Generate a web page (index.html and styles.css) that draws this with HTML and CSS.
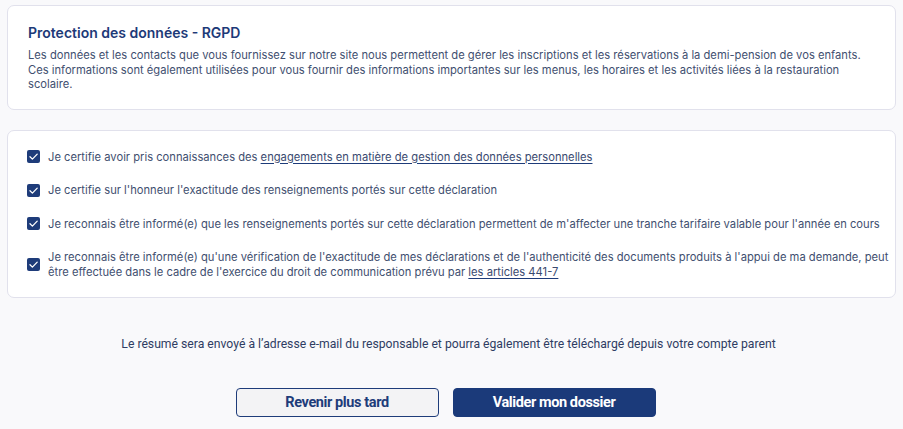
FILE: index.html
```html
<!DOCTYPE html>
<html lang="fr">
<head>
<meta charset="utf-8">
<title>RGPD</title>
<link rel="stylesheet" href="styles.css">
</head>
<body>
<main class="page">
  <section class="card card-info">
    <h2 class="title">Protection des données - RGPD</h2>
    <p class="text">Les données et les contacts que vous fournissez sur notre site nous permettent de gérer les inscriptions et les réservations à la demi-pension de vos enfants.<br>Ces informations sont également utilisées pour vous fournir des informations importantes sur les menus, les horaires et les activités liées à la restauration scolaire.</p>
  </section>

  <section class="card card-checks">
    <label class="check">
      <span class="box"><svg viewBox="0 0 13 13" width="13" height="13"><path d="M3 6.8 L5.4 9.1 L10.2 4.1" fill="none" stroke="#fff" stroke-width="1.3" stroke-linecap="round" stroke-linejoin="round"/></svg></span>
      <span class="label">Je certifie avoir pris connaissances des <a href="#" class="link">engagements en matière de gestion des données personnelles</a></span>
    </label>
    <label class="check">
      <span class="box"><svg viewBox="0 0 13 13" width="13" height="13"><path d="M3 6.8 L5.4 9.1 L10.2 4.1" fill="none" stroke="#fff" stroke-width="1.3" stroke-linecap="round" stroke-linejoin="round"/></svg></span>
      <span class="label">Je certifie sur l'honneur l'exactitude des renseignements portés sur cette déclaration</span>
    </label>
    <label class="check">
      <span class="box"><svg viewBox="0 0 13 13" width="13" height="13"><path d="M3 6.8 L5.4 9.1 L10.2 4.1" fill="none" stroke="#fff" stroke-width="1.3" stroke-linecap="round" stroke-linejoin="round"/></svg></span>
      <span class="label">Je reconnais être informé(e) que les renseignements portés sur cette déclaration permettent de m'affecter une tranche tarifaire valable pour l'année en cours</span>
    </label>
    <label class="check">
      <span class="box"><svg viewBox="0 0 13 13" width="13" height="13"><path d="M3 6.8 L5.4 9.1 L10.2 4.1" fill="none" stroke="#fff" stroke-width="1.3" stroke-linecap="round" stroke-linejoin="round"/></svg></span>
      <span class="label">Je reconnais être informé(e) qu'une vérification de l'exactitude de mes déclarations et de l'authenticité des documents produits à l'appui de ma demande, peut être effectuée dans le cadre de l'exercice du droit de communication prévu par <a href="#" class="link">les articles 441-7</a></span>
    </label>
  </section>

  <p class="note">Le résumé sera envoyé à l’adresse e-mail du responsable et pourra également être téléchargé depuis votre compte parent</p>

  <div class="actions">
    <button class="btn btn-secondary" type="button">Revenir plus tard</button>
    <button class="btn btn-primary" type="button">Valider mon dossier</button>
  </div>
</main>
</body>
</html>
```

FILE: styles.css
```css
html, body {
  margin: 0;
  padding: 0;
  background: #f9f9fb;
}
body {
  font-family: Inter, "Noto Sans", sans-serif;
  color: #3b4a6b;
}
.page {
  padding: 5px 7px 0 7px;
  display: flex;
  flex-direction: column;
}
.card {
  background: #ffffff;
  border: 1px solid #e1e1ec;
  border-radius: 7px;
}
.card-info {
  padding: 17px 20px 17px 20px;
}
.title {
  margin: 0 0 6px 0;
  font-size: 14px;
  line-height: 19px;
  font-weight: 600;
  color: #1d3a78;
}
.text {
  margin: 0;
  font-size: 11.2px;
  line-height: 14.5px;
  color: #3f4f70;
}
.card-checks {
  margin-top: 20px;
  padding: 19px 6px 18px 19px;
  display: flex;
  flex-direction: column;
  gap: 19px;
}
.check {
  display: flex;
  align-items: center;
  gap: 8px;
  font-size: 11.2px;
  line-height: 14.5px;
  color: #3f4f70;
}
.box {
  flex: 0 0 13px;
  width: 13px;
  height: 13px;
  border-radius: 2px;
  background: #1e3c7a;
  display: flex;
}
.link {
  color: #3a4a70;
  text-decoration: underline;
  text-decoration-color: #1e3c7a;
  text-decoration-thickness: 1px;
  text-underline-offset: 2px;
}
.note {
  margin: 39px 0 0 0;
  padding-right: 6px;
  text-align: center;
  font-family: Roboto, "Liberation Sans", sans-serif;
  font-size: 12.2px;
  line-height: 14px;
  color: #2f3d63;
}
.actions {
  margin-top: 37px;
  padding-right: 12px;
  display: flex;
  justify-content: center;
  gap: 14px;
}
.btn {
  width: 203px;
  height: 29px;
  border-radius: 4px;
  font-family: Roboto, "Liberation Sans", sans-serif;
  font-size: 14.5px;
  font-weight: 700;
  letter-spacing: -0.4px;
  cursor: pointer;
}
.btn-secondary {
  background: #f3f3f5;
  border: 1px solid #1e3c7a;
  color: #1e3c7a;
}
.btn-primary {
  background: #1b3a7a;
  border: 1px solid #1b3a7a;
  color: #ffffff;
}
```
